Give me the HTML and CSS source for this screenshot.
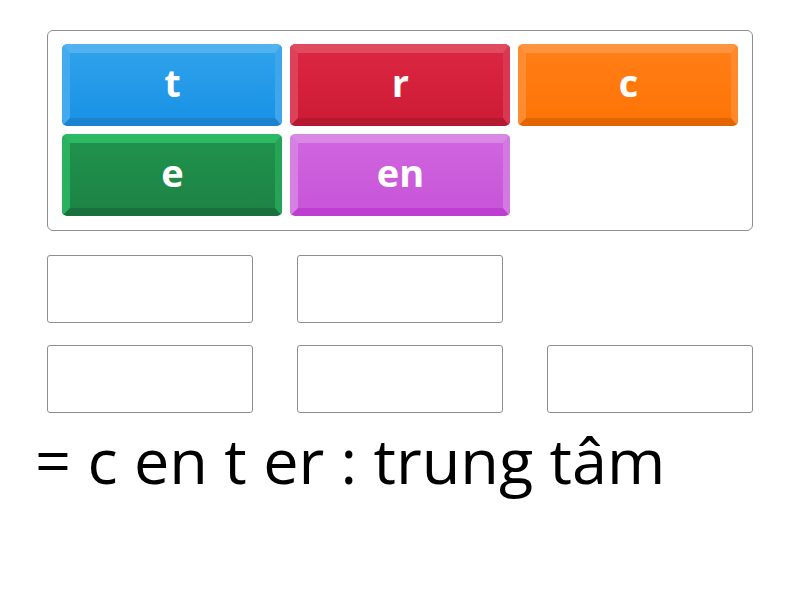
FILE: index.html
```html
<!DOCTYPE html>
<html>
<head>
<meta charset="utf-8">
<link rel="stylesheet" href="styles.css">
</head>
<body>
<div class="bank">
  <div class="tile blue">t</div>
  <div class="tile red">r</div>
  <div class="tile orange">c</div>
  <div class="tile green">e</div>
  <div class="tile purple">en</div>
</div>
<div class="slots">
  <div class="slot"></div>
  <div class="slot"></div>
  <div class="empty"></div>
  <div class="slot"></div>
  <div class="slot"></div>
  <div class="slot"></div>
</div>
<div class="answer">= c en t er : trung tâm</div>
</body>
</html>
```

FILE: styles.css
```css
html, body {
  margin: 0;
  padding: 0;
  background: #ffffff;
}
body {
  font-family: "Open Sans", "Liberation Sans", sans-serif;
  width: 800px;
  height: 600px;
  overflow: hidden;
}
.bank {
  margin: 30px 0 0 47px;
  width: 676px;
  padding: 13px 14px 14px 14px;
  border: 1px solid #8e8e8e;
  border-radius: 6px;
  display: grid;
  grid-template-columns: repeat(3, 220px);
  grid-auto-rows: 82px;
  column-gap: 8px;
  row-gap: 8px;
}
.tile {
  box-sizing: border-box;
  border-style: solid;
  border-width: 9px 7px 8px 8px;
  border-radius: 5px;
  display: flex;
  align-items: center;
  justify-content: center;
  color: #ffffff;
  font-weight: 700;
  font-size: 38px;
  line-height: 1;
  padding-bottom: 8px;
}
.blue {
  background: linear-gradient(#2ea1ea, #1a93e6);
  border-color: #52b2ef #3ea6ec #1c84cf #44aaee;
}
.red {
  background: linear-gradient(#da2640, #cf1c36);
  border-color: #e14b60 #d93850 #b5192f #dd4258;
}
.orange {
  background: linear-gradient(#ff7e16, #ff7406);
  border-color: #ff9440 #ff8a2c #e26500 #ff8c30;
}
.green {
  background: linear-gradient(#20914d, #1d8445);
  border-color: #2cb964 #25a457 #19703c #29b160;
}
.purple {
  background: linear-gradient(#d064de, #c756d8);
  border-color: #d988e4 #d27ae0 #bf3ed2 #d580e2;
}
.slots {
  margin: 24px 0 0 47px;
  display: grid;
  grid-template-columns: 206px 206px 206px;
  grid-auto-rows: 68px;
  column-gap: 44px;
  row-gap: 22px;
}
.slot {
  box-sizing: border-box;
  border: 1px solid #8e8e8e;
  border-radius: 3px;
}
.answer {
  margin: 15px 0 0 35px;
  font-size: 63px;
  line-height: 1;
  color: #000000;
  white-space: nowrap;
}
```
